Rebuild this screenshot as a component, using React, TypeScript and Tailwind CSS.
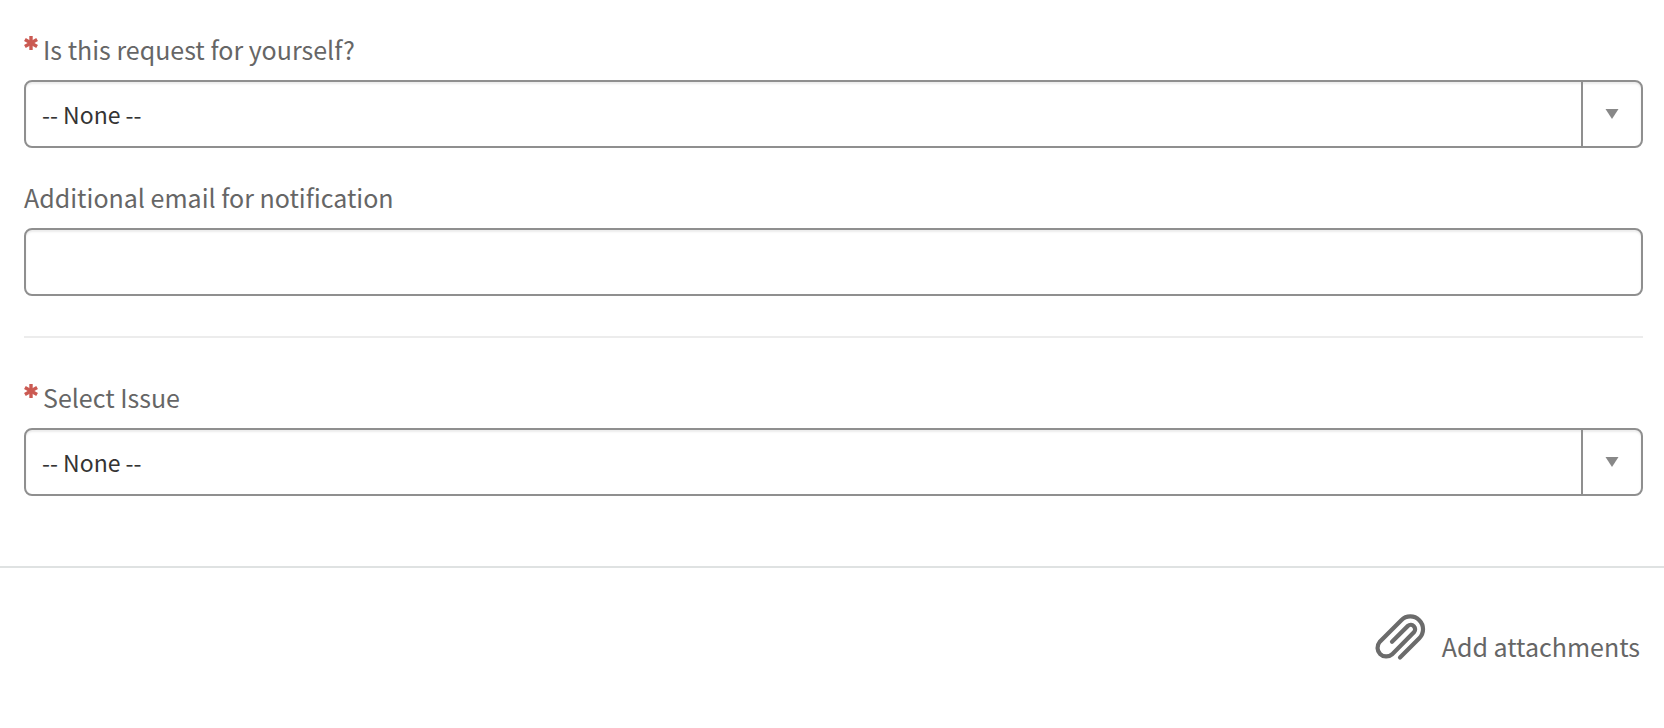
import { useId } from "react";

function RequiredMark() {
  return (
    <svg viewBox="0 0 14 14" className="mt-1 size-3.5 shrink-0" aria-label="Required" role="img">
      <g stroke="#cb5a52" strokeWidth="3.4" strokeLinejoin="round">
        <path d="M7 0V14" />
        <path d="M0.9 3.5L13.1 10.5" />
        <path d="M13.1 3.5L0.9 10.5" />
      </g>
    </svg>
  );
}

function FieldLabel({ htmlFor, text, required }: { htmlFor: string; text: string; required?: boolean }) {
  return (
    <label htmlFor={htmlFor} className="flex h-12 items-start gap-[5px] text-[25px] leading-[34px] text-[#666666]">
      {required && <RequiredMark />}
      <span>{text}</span>
    </label>
  );
}

const box =
  "h-17 w-full appearance-none rounded-lg border-2 border-[#8f8f8f] bg-white px-4 text-[23px] text-[#343434] shadow-[inset_0_2px_2px_rgba(0,0,0,0.08)] outline-none focus:border-blue-500";

function SelectField({ text }: { text: string }) {
  const id = useId();
  return (
    <div>
      <FieldLabel htmlFor={id} text={text} required />
      <div className="grid">
        <select id={id} className={`${box} col-start-1 row-start-1`} defaultValue="">
          <option value="">-- None --</option>
        </select>
        <span className="pointer-events-none col-start-1 row-start-1 my-0.5 mr-0.5 flex w-15 items-center justify-center self-stretch justify-self-end border-l-2 border-[#8f8f8f]">
          <svg viewBox="0 0 14 10" className="h-2.5 w-3.5" aria-hidden="true">
            <path d="M0.5 0H13.5L7 10Z" fill="#888888" />
          </svg>
        </span>
      </div>
    </div>
  );
}

function TextField({ text }: { text: string }) {
  const id = useId();
  return (
    <div>
      <FieldLabel htmlFor={id} text={text} />
      <input id={id} type="email" className={`${box} block`} />
    </div>
  );
}

export default function App() {
  return (
    <main className="min-h-screen bg-white font-['Noto_Sans_CJK_SC',sans-serif]">
      <form className="pt-8 pr-[21px] pb-[70px] pl-6">
        <div className="flex flex-col gap-8">
          <SelectField text="Is this request for yourself?" />
          <TextField text="Additional email for notification" />
        </div>
        <hr className="mt-10 mb-[42px] border-t-2 border-[#ececec]" />
        <SelectField text="Select Issue" />
      </form>
      <footer className="flex justify-end border-t-2 border-[#dfe2e2] py-10 pr-6">
        <button type="button" className="flex items-center gap-3 text-[25px] leading-10 text-[#666666]">
          <svg viewBox="0 0 60 60" className="size-15" fill="none" stroke="#6b6b6b" strokeWidth="4.2" strokeLinecap="round" aria-hidden="true">
            <path d="M30 49.5L49.3 30.2A12.7 12.7 0 0 0 31.3 12.2L9.6 34A8.8 8.8 0 0 0 22 46.4L44.1 24.1A4.4 4.4 0 0 0 37.9 17.9L22 33.8" />
          </svg>
          <span className="pt-4">Add attachments</span>
        </button>
      </footer>
    </main>
  );
}
